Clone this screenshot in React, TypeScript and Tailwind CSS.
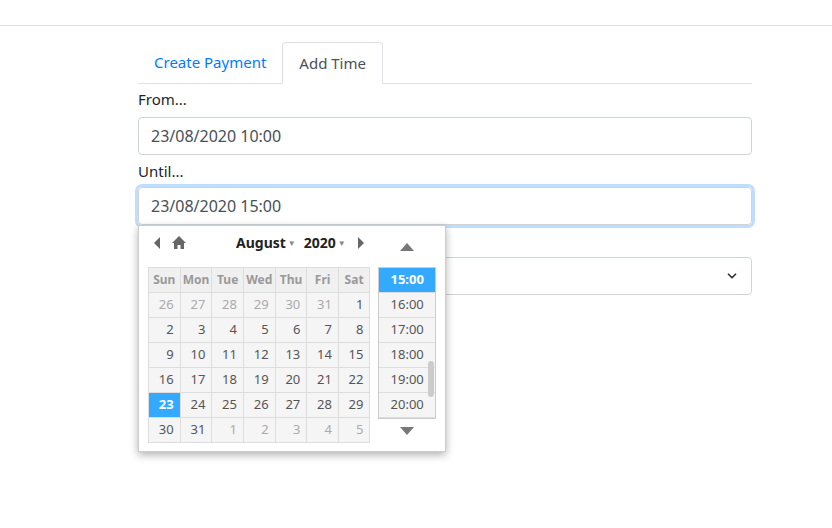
import { ChevronDown } from 'lucide-react';

const weeks = [
  [26, 27, 28, 29, 30, 31, 1],
  [2, 3, 4, 5, 6, 7, 8],
  [9, 10, 11, 12, 13, 14, 15],
  [16, 17, 18, 19, 20, 21, 22],
  [23, 24, 25, 26, 27, 28, 29],
  [30, 31, 1, 2, 3, 4, 5],
];
const days = ['Sun', 'Mon', 'Tue', 'Wed', 'Thu', 'Fri', 'Sat'];
const times = ['15:00', '16:00', '17:00', '18:00', '19:00', '20:00'];

function DatePicker() {
  return (
    <div className="absolute left-0 top-[38px] z-10 w-[308px] border border-[#ccc] bg-white px-[9px] pb-[8px] pt-[8px] shadow-[0_3px_8px_rgba(0,0,0,0.3)] font-['Liberation_Sans',sans-serif] text-[13px] text-[#333]">
      <div className="flex gap-[8px]">
        <div className="w-[224px]">
          <div className="flex h-[17px] items-center text-[#666]">
            <svg width="10" height="14" viewBox="0 0 10 14" className="ml-[4px]"><path d="M8 1 L2 7 L8 13 Z" fill="#666" /></svg>
            <svg width="14" height="13" viewBox="0 0 14 13" className="ml-[10px]"><path d="M7 0 L14 7 L12 7 L12 13 L8.5 13 L8.5 9 L5.5 9 L5.5 13 L2 13 L2 7 L0 7 Z" fill="#666" /></svg>
            <div className="ml-[50px] flex items-center font-bold text-[14px] text-[#222]">
              August<span className="ml-[2px] text-[8px] text-[#888]">▼</span>
              <span className="ml-[8px]">2020</span><span className="ml-[2px] text-[8px] text-[#888]">▼</span>
            </div>
            <svg width="10" height="14" viewBox="0 0 10 14" className="ml-auto mr-[4px]"><path d="M2 1 L8 7 L2 13 Z" fill="#666" /></svg>
          </div>
          <table className="mt-[16px] w-full border-collapse">
            <thead>
              <tr>
                {days.map((d) => (
                  <th key={d} className="h-[25px] w-[32px] border border-[#ddd] bg-[#f0f0f0] text-center text-[12px] font-bold text-[#999]">{d}</th>
                ))}
              </tr>
            </thead>
            <tbody>
              {weeks.map((w, i) => (
                <tr key={i}>
                  {w.map((d, j) => {
                    const other = (i === 0 && d > 7) || (i === 5 && d < 7);
                    const sel = i === 4 && j === 0;
                    return (
                      <td
                        key={j}
                        className={`h-[25px] border border-[#ddd] pr-[6px] text-right text-[13px] ${
                          sel ? 'bg-[#33aaff] font-bold text-white' : other ? 'bg-[#f5f5f5] text-[#aaa]' : 'bg-[#f5f5f5] text-[#555]'
                        }`}
                      >
                        {d}
                      </td>
                    );
                  })}
                </tr>
              ))}
            </tbody>
          </table>
        </div>
        <div className="w-[58px]">
          <div className="flex h-[17px] items-end justify-center">
            <svg width="14" height="8" viewBox="0 0 14 8"><path d="M0 8 L7 0 L14 8 Z" fill="#777" /></svg>
          </div>
          <div className="relative mt-[16px] border border-[#ccc]">
            {times.map((t, i) => (
              <div
                key={t}
                className={`flex h-[25px] items-center justify-center border-b border-[#ddd] last:border-b-0 text-[13px] ${
                  i === 0 ? 'bg-[#33aaff] font-bold text-white' : 'bg-[#f5f5f5] text-[#555]'
                }`}
              >
                {t}
              </div>
            ))}
            <div className="absolute right-[1px] top-[93px] h-[36px] w-[6px] rounded bg-[#ccc]" />
          </div>
          <div className="mt-[8px] flex justify-center">
            <svg width="14" height="8" viewBox="0 0 14 8"><path d="M0 0 L14 0 L7 8 Z" fill="#777" /></svg>
          </div>
        </div>
      </div>
    </div>
  );
}

export default function App() {
  const input = 'h-[38px] w-full rounded border border-[#ced4da] px-3 flex items-center text-[16px] text-[#495057]';
  return (
    <div className="h-[528px] w-[832px] bg-white font-['Open_Sans',sans-serif] text-[#212529]">
      <div className="h-[26px] border-b border-[#dee2e6]" />
      <div className="ml-[138px] w-[614px] pt-[16px]">
        <div className="flex border-b border-[#dee2e6] text-[15px]">
          <div className="flex h-[41px] items-center px-[16px] text-[#007bff]">Create Payment</div>
          <div className="-mb-px flex h-[42px] items-center rounded-t border border-[#dee2e6] border-b-white bg-white px-[16px] text-[#495057]">Add Time</div>
        </div>
        <div className="mt-[3px] h-[30px] text-[15px] leading-[24px]">From...</div>
        <div className={input}>23/08/2020 10:00</div>
        <div className="mt-[4px] h-[28px] text-[15px] leading-[24px]">Until...</div>
        <div className="relative">
          <div className={`${input} border-[#80bdff] shadow-[0_0_0_3px_rgba(0,123,255,0.25)]`}>23/08/2020 15:00</div>
          <DatePicker />
        </div>
        <div className={`${input} mt-[32px] justify-end`}>
          <ChevronDown size={14} strokeWidth={3} className="text-[#333]" />
        </div>
      </div>
    </div>
  );
}
